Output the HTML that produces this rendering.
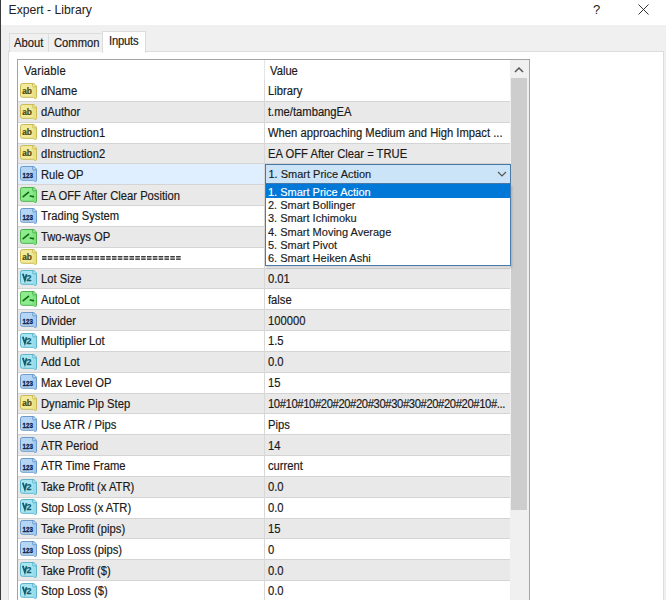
<!DOCTYPE html>
<html><head><meta charset="utf-8"><style>
*{margin:0;padding:0;box-sizing:border-box}
html,body{width:666px;height:600px;overflow:hidden;background:#f0f0f0}
body{position:relative;font-family:"Liberation Sans",sans-serif;color:#000}
.a{position:absolute}
svg text{font-family:"Liberation Sans",sans-serif;font-weight:bold}
.t{position:absolute;white-space:nowrap;font-size:12.0px;line-height:13px;color:#1a1a1a;-webkit-text-stroke-width:0.18px;transform:scaleX(0.935);transform-origin:0 0}
</style></head><body>

<div class="a" style="left:0;top:0;width:666px;height:25px;background:#fff"></div>
<div class="t" style="left:8.5px;top:3.3px;font-size:12.2px;line-height:14px;color:#222;transform:none;-webkit-text-stroke-width:0">Expert - Library</div>
<div class="t" style="left:593px;top:3px;font-size:13px;line-height:14px;color:#222;transform:none;-webkit-text-stroke-width:0">?</div>
<svg class="a" style="left:637px;top:3px" width="13" height="13" viewBox="0 0 13 13"><path d="M1.5 1.5 L11.5 11.5 M11.5 1.5 L1.5 11.5" stroke="#333" stroke-width="1"/></svg>
<div class="a" style="left:0;top:0;width:1px;height:600px;background:#3a3a3a"></div>
<div class="a" style="left:8px;top:51px;width:656px;height:560px;background:#fff;border:1px solid #dcdcdc"></div>
<div class="a" style="left:9px;top:33px;width:40px;height:19px;background:#f0f0f0;border:1px solid #dcdcdc;border-bottom:none"></div>
<div class="t" style="left:14px;top:36.5px">About</div>
<div class="a" style="left:48px;top:33px;width:55px;height:19px;background:#f0f0f0;border:1px solid #dcdcdc;border-bottom:none"></div>
<div class="t" style="left:54px;top:36.5px">Common</div>
<div class="a" style="left:102px;top:31px;width:44px;height:22px;background:#fff;border:1px solid #dcdcdc;border-bottom:none"></div>
<div class="t" style="left:109px;top:34.8px;letter-spacing:-0.2px">Inputs</div>
<div class="a" style="left:17px;top:59px;width:513px;height:560px;background:#fff;border:1px solid #a3a3a8"></div>
<div class="a" style="left:264px;top:60px;width:1px;height:20px;background:#e5e5e5"></div>
<div class="t" style="left:24px;top:64.5px;letter-spacing:0.2px">Variable</div>
<div class="t" style="left:269.5px;top:64.5px">Value</div>
<div class="a" style="left:18px;top:80px;width:492px;height:21px;background:#fff;"></div>
<div class="a" style="left:264px;top:80px;width:1px;height:21px;background:#d8d8d8"></div>
<div class="a" style="left:20px;top:82.7px;height:16px"><svg width="17" height="16" viewBox="0 0 17 16"><path d="M2.5 0.5 H13 Q14 0.5 15 1.5 L15.8 2.3 Q16.5 3 16.5 4 V14.2 Q16.5 15.6 15.2 15.4 Q14 15.2 13.2 14.3 H2.5 Q0.5 14.3 0.5 12.3 V2.5 Q0.5 0.5 2.5 0.5 Z" fill="#f2ea9a" stroke="#c9bb58" stroke-width="1"/><path d="M12.6 3.5 V14.2 Q13.8 15.3 15.2 15.3 Q16 15.3 16 14.2 V4 Z" fill="#e6da70" opacity="0.6"/><path d="M12.6 0.8 V3.2 Q12.6 3.8 13.2 3.8 H16.2" fill="none" stroke="#c9bb58" stroke-width="0.9"/><text x="2.2" y="11" font-size="9.3" fill="#514608" stroke="#514608" stroke-width="0.2" textLength="9.8" lengthAdjust="spacingAndGlyphs">ab</text></svg></div>
<div class="t" style="left:41.2px;top:85.4px;">dName</div>
<div class="t" style="left:267.5px;top:85.4px;">Library</div>
<div class="a" style="left:18px;top:101px;width:492px;height:21px;background:#e9e9e9;border-top:1px solid #d4d4d4;"></div>
<div class="a" style="left:264px;top:101px;width:1px;height:21px;background:#d8d8d8"></div>
<div class="a" style="left:20px;top:103.5px;height:16px"><svg width="17" height="16" viewBox="0 0 17 16"><path d="M2.5 0.5 H13 Q14 0.5 15 1.5 L15.8 2.3 Q16.5 3 16.5 4 V14.2 Q16.5 15.6 15.2 15.4 Q14 15.2 13.2 14.3 H2.5 Q0.5 14.3 0.5 12.3 V2.5 Q0.5 0.5 2.5 0.5 Z" fill="#f2ea9a" stroke="#c9bb58" stroke-width="1"/><path d="M12.6 3.5 V14.2 Q13.8 15.3 15.2 15.3 Q16 15.3 16 14.2 V4 Z" fill="#e6da70" opacity="0.6"/><path d="M12.6 0.8 V3.2 Q12.6 3.8 13.2 3.8 H16.2" fill="none" stroke="#c9bb58" stroke-width="0.9"/><text x="2.2" y="11" font-size="9.3" fill="#514608" stroke="#514608" stroke-width="0.2" textLength="9.8" lengthAdjust="spacingAndGlyphs">ab</text></svg></div>
<div class="t" style="left:41.2px;top:106.2px;">dAuthor</div>
<div class="t" style="left:267.5px;top:106.2px;">t.me/tambangEA</div>
<div class="a" style="left:18px;top:122px;width:492px;height:21px;background:#fff;border-top:1px solid #d4d4d4;"></div>
<div class="a" style="left:264px;top:122px;width:1px;height:21px;background:#d8d8d8"></div>
<div class="a" style="left:20px;top:124.4px;height:16px"><svg width="17" height="16" viewBox="0 0 17 16"><path d="M2.5 0.5 H13 Q14 0.5 15 1.5 L15.8 2.3 Q16.5 3 16.5 4 V14.2 Q16.5 15.6 15.2 15.4 Q14 15.2 13.2 14.3 H2.5 Q0.5 14.3 0.5 12.3 V2.5 Q0.5 0.5 2.5 0.5 Z" fill="#f2ea9a" stroke="#c9bb58" stroke-width="1"/><path d="M12.6 3.5 V14.2 Q13.8 15.3 15.2 15.3 Q16 15.3 16 14.2 V4 Z" fill="#e6da70" opacity="0.6"/><path d="M12.6 0.8 V3.2 Q12.6 3.8 13.2 3.8 H16.2" fill="none" stroke="#c9bb58" stroke-width="0.9"/><text x="2.2" y="11" font-size="9.3" fill="#514608" stroke="#514608" stroke-width="0.2" textLength="9.8" lengthAdjust="spacingAndGlyphs">ab</text></svg></div>
<div class="t" style="left:41.2px;top:127.1px;">dInstruction1</div>
<div class="t" style="left:267.5px;top:127.1px;letter-spacing:0px;">When approaching Medium and High Impact ...</div>
<div class="a" style="left:18px;top:143px;width:492px;height:20px;background:#e9e9e9;border-top:1px solid #d4d4d4;"></div>
<div class="a" style="left:264px;top:143px;width:1px;height:20px;background:#d8d8d8"></div>
<div class="a" style="left:20px;top:145.2px;height:16px"><svg width="17" height="16" viewBox="0 0 17 16"><path d="M2.5 0.5 H13 Q14 0.5 15 1.5 L15.8 2.3 Q16.5 3 16.5 4 V14.2 Q16.5 15.6 15.2 15.4 Q14 15.2 13.2 14.3 H2.5 Q0.5 14.3 0.5 12.3 V2.5 Q0.5 0.5 2.5 0.5 Z" fill="#f2ea9a" stroke="#c9bb58" stroke-width="1"/><path d="M12.6 3.5 V14.2 Q13.8 15.3 15.2 15.3 Q16 15.3 16 14.2 V4 Z" fill="#e6da70" opacity="0.6"/><path d="M12.6 0.8 V3.2 Q12.6 3.8 13.2 3.8 H16.2" fill="none" stroke="#c9bb58" stroke-width="0.9"/><text x="2.2" y="11" font-size="9.3" fill="#514608" stroke="#514608" stroke-width="0.2" textLength="9.8" lengthAdjust="spacingAndGlyphs">ab</text></svg></div>
<div class="t" style="left:41.2px;top:147.9px;">dInstruction2</div>
<div class="t" style="left:267.5px;top:147.9px;">EA OFF After Clear = TRUE</div>
<div class="a" style="left:18px;top:163px;width:492px;height:21px;background:#dfefff;border-top:1px solid #d4d4d4;"></div>
<div class="a" style="left:264px;top:163px;width:1px;height:21px;background:#d8d8d8"></div>
<div class="a" style="left:20px;top:166.0px;height:16px"><svg width="17" height="16" viewBox="0 0 17 16"><path d="M2.5 0.5 H13 Q14 0.5 15 1.5 L15.8 2.3 Q16.5 3 16.5 4 V14.2 Q16.5 15.6 15.2 15.4 Q14 15.2 13.2 14.3 H2.5 Q0.5 14.3 0.5 12.3 V2.5 Q0.5 0.5 2.5 0.5 Z" fill="#b4d5f3" stroke="#6b9acb" stroke-width="1"/><path d="M12.6 3.5 V14.2 Q13.8 15.3 15.2 15.3 Q16 15.3 16 14.2 V4 Z" fill="#9ac2ea" opacity="0.6"/><path d="M12.6 0.8 V3.2 Q12.6 3.8 13.2 3.8 H16.2" fill="none" stroke="#6b9acb" stroke-width="0.9"/><text x="2.5" y="12.0" font-size="7.9" fill="#0a2350" stroke="#0a2350" stroke-width="0.35" textLength="10.4" lengthAdjust="spacingAndGlyphs">123</text></svg></div>
<div class="t" style="left:41.2px;top:168.7px;">Rule OP</div>
<div class="a" style="left:18px;top:184px;width:492px;height:21px;background:#e9e9e9;border-top:1px solid #d4d4d4;"></div>
<div class="a" style="left:264px;top:184px;width:1px;height:21px;background:#d8d8d8"></div>
<div class="a" style="left:20px;top:186.9px;height:16px"><svg width="17" height="16" viewBox="0 0 17 16"><path d="M2.5 0.5 H13 Q14 0.5 15 1.5 L15.8 2.3 Q16.5 3 16.5 4 V14.2 Q16.5 15.6 15.2 15.4 Q14 15.2 13.2 14.3 H2.5 Q0.5 14.3 0.5 12.3 V2.5 Q0.5 0.5 2.5 0.5 Z" fill="#8eea8e" stroke="#4cb24c" stroke-width="1"/><path d="M12.6 3.5 V14.2 Q13.8 15.3 15.2 15.3 Q16 15.3 16 14.2 V4 Z" fill="#74dc74" opacity="0.6"/><path d="M12.6 0.8 V3.2 Q12.6 3.8 13.2 3.8 H16.2" fill="none" stroke="#4cb24c" stroke-width="0.9"/><path d="M3.2 9.7 L8.5 5.3 M10.3 9.0 L13.3 9.7" stroke="#0a6e0a" stroke-width="1.7" stroke-linecap="round" fill="none"/></svg></div>
<div class="t" style="left:41.2px;top:189.6px;">EA OFF After Clear Position</div>
<div class="a" style="left:18px;top:205px;width:492px;height:21px;background:#fff;border-top:1px solid #d4d4d4;"></div>
<div class="a" style="left:264px;top:205px;width:1px;height:21px;background:#d8d8d8"></div>
<div class="a" style="left:20px;top:207.7px;height:16px"><svg width="17" height="16" viewBox="0 0 17 16"><path d="M2.5 0.5 H13 Q14 0.5 15 1.5 L15.8 2.3 Q16.5 3 16.5 4 V14.2 Q16.5 15.6 15.2 15.4 Q14 15.2 13.2 14.3 H2.5 Q0.5 14.3 0.5 12.3 V2.5 Q0.5 0.5 2.5 0.5 Z" fill="#b4d5f3" stroke="#6b9acb" stroke-width="1"/><path d="M12.6 3.5 V14.2 Q13.8 15.3 15.2 15.3 Q16 15.3 16 14.2 V4 Z" fill="#9ac2ea" opacity="0.6"/><path d="M12.6 0.8 V3.2 Q12.6 3.8 13.2 3.8 H16.2" fill="none" stroke="#6b9acb" stroke-width="0.9"/><text x="2.5" y="12.0" font-size="7.9" fill="#0a2350" stroke="#0a2350" stroke-width="0.35" textLength="10.4" lengthAdjust="spacingAndGlyphs">123</text></svg></div>
<div class="t" style="left:41.2px;top:210.4px;">Trading System</div>
<div class="a" style="left:18px;top:226px;width:492px;height:21px;background:#e9e9e9;border-top:1px solid #d4d4d4;"></div>
<div class="a" style="left:264px;top:226px;width:1px;height:21px;background:#d8d8d8"></div>
<div class="a" style="left:20px;top:228.5px;height:16px"><svg width="17" height="16" viewBox="0 0 17 16"><path d="M2.5 0.5 H13 Q14 0.5 15 1.5 L15.8 2.3 Q16.5 3 16.5 4 V14.2 Q16.5 15.6 15.2 15.4 Q14 15.2 13.2 14.3 H2.5 Q0.5 14.3 0.5 12.3 V2.5 Q0.5 0.5 2.5 0.5 Z" fill="#8eea8e" stroke="#4cb24c" stroke-width="1"/><path d="M12.6 3.5 V14.2 Q13.8 15.3 15.2 15.3 Q16 15.3 16 14.2 V4 Z" fill="#74dc74" opacity="0.6"/><path d="M12.6 0.8 V3.2 Q12.6 3.8 13.2 3.8 H16.2" fill="none" stroke="#4cb24c" stroke-width="0.9"/><path d="M3.2 9.7 L8.5 5.3 M10.3 9.0 L13.3 9.7" stroke="#0a6e0a" stroke-width="1.7" stroke-linecap="round" fill="none"/></svg></div>
<div class="t" style="left:41.2px;top:231.2px;">Two-ways OP</div>
<div class="a" style="left:18px;top:247px;width:492px;height:21px;background:#fff;border-top:1px solid #d4d4d4;"></div>
<div class="a" style="left:264px;top:247px;width:1px;height:21px;background:#d8d8d8"></div>
<div class="a" style="left:20px;top:249.4px;height:16px"><svg width="17" height="16" viewBox="0 0 17 16"><path d="M2.5 0.5 H13 Q14 0.5 15 1.5 L15.8 2.3 Q16.5 3 16.5 4 V14.2 Q16.5 15.6 15.2 15.4 Q14 15.2 13.2 14.3 H2.5 Q0.5 14.3 0.5 12.3 V2.5 Q0.5 0.5 2.5 0.5 Z" fill="#f2ea9a" stroke="#c9bb58" stroke-width="1"/><path d="M12.6 3.5 V14.2 Q13.8 15.3 15.2 15.3 Q16 15.3 16 14.2 V4 Z" fill="#e6da70" opacity="0.6"/><path d="M12.6 0.8 V3.2 Q12.6 3.8 13.2 3.8 H16.2" fill="none" stroke="#c9bb58" stroke-width="0.9"/><text x="2.2" y="11" font-size="9.3" fill="#514608" stroke="#514608" stroke-width="0.2" textLength="9.8" lengthAdjust="spacingAndGlyphs">ab</text></svg></div>
<svg class="a" style="left:42.2px;top:256.0px" width="140" height="4" fill="#3a3a3a"><rect x="0.00" y="0" width="4.6" height="1.5"/><rect x="0.00" y="2.4" width="4.6" height="1.5"/><rect x="5.83" y="0" width="4.6" height="1.5"/><rect x="5.83" y="2.4" width="4.6" height="1.5"/><rect x="11.66" y="0" width="4.6" height="1.5"/><rect x="11.66" y="2.4" width="4.6" height="1.5"/><rect x="17.49" y="0" width="4.6" height="1.5"/><rect x="17.49" y="2.4" width="4.6" height="1.5"/><rect x="23.32" y="0" width="4.6" height="1.5"/><rect x="23.32" y="2.4" width="4.6" height="1.5"/><rect x="29.15" y="0" width="4.6" height="1.5"/><rect x="29.15" y="2.4" width="4.6" height="1.5"/><rect x="34.98" y="0" width="4.6" height="1.5"/><rect x="34.98" y="2.4" width="4.6" height="1.5"/><rect x="40.81" y="0" width="4.6" height="1.5"/><rect x="40.81" y="2.4" width="4.6" height="1.5"/><rect x="46.64" y="0" width="4.6" height="1.5"/><rect x="46.64" y="2.4" width="4.6" height="1.5"/><rect x="52.47" y="0" width="4.6" height="1.5"/><rect x="52.47" y="2.4" width="4.6" height="1.5"/><rect x="58.30" y="0" width="4.6" height="1.5"/><rect x="58.30" y="2.4" width="4.6" height="1.5"/><rect x="64.13" y="0" width="4.6" height="1.5"/><rect x="64.13" y="2.4" width="4.6" height="1.5"/><rect x="69.96" y="0" width="4.6" height="1.5"/><rect x="69.96" y="2.4" width="4.6" height="1.5"/><rect x="75.79" y="0" width="4.6" height="1.5"/><rect x="75.79" y="2.4" width="4.6" height="1.5"/><rect x="81.62" y="0" width="4.6" height="1.5"/><rect x="81.62" y="2.4" width="4.6" height="1.5"/><rect x="87.45" y="0" width="4.6" height="1.5"/><rect x="87.45" y="2.4" width="4.6" height="1.5"/><rect x="93.28" y="0" width="4.6" height="1.5"/><rect x="93.28" y="2.4" width="4.6" height="1.5"/><rect x="99.11" y="0" width="4.6" height="1.5"/><rect x="99.11" y="2.4" width="4.6" height="1.5"/><rect x="104.94" y="0" width="4.6" height="1.5"/><rect x="104.94" y="2.4" width="4.6" height="1.5"/><rect x="110.77" y="0" width="4.6" height="1.5"/><rect x="110.77" y="2.4" width="4.6" height="1.5"/><rect x="116.60" y="0" width="4.6" height="1.5"/><rect x="116.60" y="2.4" width="4.6" height="1.5"/><rect x="122.43" y="0" width="4.6" height="1.5"/><rect x="122.43" y="2.4" width="4.6" height="1.5"/><rect x="128.26" y="0" width="4.6" height="1.5"/><rect x="128.26" y="2.4" width="4.6" height="1.5"/><rect x="134.09" y="0" width="4.6" height="1.5"/><rect x="134.09" y="2.4" width="4.6" height="1.5"/></svg>
<div class="a" style="left:18px;top:268px;width:492px;height:20px;background:#e9e9e9;border-top:1px solid #d4d4d4;"></div>
<div class="a" style="left:264px;top:268px;width:1px;height:20px;background:#d8d8d8"></div>
<div class="a" style="left:20px;top:270.2px;height:16px"><svg width="17" height="16" viewBox="0 0 17 16"><path d="M2.5 0.5 H13 Q14 0.5 15 1.5 L15.8 2.3 Q16.5 3 16.5 4 V14.2 Q16.5 15.6 15.2 15.4 Q14 15.2 13.2 14.3 H2.5 Q0.5 14.3 0.5 12.3 V2.5 Q0.5 0.5 2.5 0.5 Z" fill="#a8e5f2" stroke="#5db4cb" stroke-width="1"/><path d="M12.6 3.5 V14.2 Q13.8 15.3 15.2 15.3 Q16 15.3 16 14.2 V4 Z" fill="#88d6e9" opacity="0.6"/><path d="M12.6 0.8 V3.2 Q12.6 3.8 13.2 3.8 H16.2" fill="none" stroke="#5db4cb" stroke-width="0.9"/><path d="M2.8 3.8 L4.9 10.2 L6.6 4.2" stroke="#135c6c" stroke-width="1.8" fill="none"/><text x="6.5" y="10.7" font-size="9.6" fill="#135c6c" stroke="#135c6c" stroke-width="0.25" textLength="5.0" lengthAdjust="spacingAndGlyphs">2</text></svg></div>
<div class="t" style="left:41.2px;top:272.9px;">Lot Size</div>
<div class="t" style="left:267.5px;top:272.9px;">0.01</div>
<div class="a" style="left:18px;top:288px;width:492px;height:21px;background:#fff;border-top:1px solid #d4d4d4;"></div>
<div class="a" style="left:264px;top:288px;width:1px;height:21px;background:#d8d8d8"></div>
<div class="a" style="left:20px;top:291.0px;height:16px"><svg width="17" height="16" viewBox="0 0 17 16"><path d="M2.5 0.5 H13 Q14 0.5 15 1.5 L15.8 2.3 Q16.5 3 16.5 4 V14.2 Q16.5 15.6 15.2 15.4 Q14 15.2 13.2 14.3 H2.5 Q0.5 14.3 0.5 12.3 V2.5 Q0.5 0.5 2.5 0.5 Z" fill="#8eea8e" stroke="#4cb24c" stroke-width="1"/><path d="M12.6 3.5 V14.2 Q13.8 15.3 15.2 15.3 Q16 15.3 16 14.2 V4 Z" fill="#74dc74" opacity="0.6"/><path d="M12.6 0.8 V3.2 Q12.6 3.8 13.2 3.8 H16.2" fill="none" stroke="#4cb24c" stroke-width="0.9"/><path d="M3.2 9.7 L8.5 5.3 M10.3 9.0 L13.3 9.7" stroke="#0a6e0a" stroke-width="1.7" stroke-linecap="round" fill="none"/></svg></div>
<div class="t" style="left:41.2px;top:293.7px;">AutoLot</div>
<div class="t" style="left:267.5px;top:293.7px;">false</div>
<div class="a" style="left:18px;top:309px;width:492px;height:21px;background:#e9e9e9;border-top:1px solid #d4d4d4;"></div>
<div class="a" style="left:264px;top:309px;width:1px;height:21px;background:#d8d8d8"></div>
<div class="a" style="left:20px;top:311.9px;height:16px"><svg width="17" height="16" viewBox="0 0 17 16"><path d="M2.5 0.5 H13 Q14 0.5 15 1.5 L15.8 2.3 Q16.5 3 16.5 4 V14.2 Q16.5 15.6 15.2 15.4 Q14 15.2 13.2 14.3 H2.5 Q0.5 14.3 0.5 12.3 V2.5 Q0.5 0.5 2.5 0.5 Z" fill="#b4d5f3" stroke="#6b9acb" stroke-width="1"/><path d="M12.6 3.5 V14.2 Q13.8 15.3 15.2 15.3 Q16 15.3 16 14.2 V4 Z" fill="#9ac2ea" opacity="0.6"/><path d="M12.6 0.8 V3.2 Q12.6 3.8 13.2 3.8 H16.2" fill="none" stroke="#6b9acb" stroke-width="0.9"/><text x="2.5" y="12.0" font-size="7.9" fill="#0a2350" stroke="#0a2350" stroke-width="0.35" textLength="10.4" lengthAdjust="spacingAndGlyphs">123</text></svg></div>
<div class="t" style="left:41.2px;top:314.6px;">Divider</div>
<div class="t" style="left:267.5px;top:314.6px;">100000</div>
<div class="a" style="left:18px;top:330px;width:492px;height:21px;background:#fff;border-top:1px solid #d4d4d4;"></div>
<div class="a" style="left:264px;top:330px;width:1px;height:21px;background:#d8d8d8"></div>
<div class="a" style="left:20px;top:332.7px;height:16px"><svg width="17" height="16" viewBox="0 0 17 16"><path d="M2.5 0.5 H13 Q14 0.5 15 1.5 L15.8 2.3 Q16.5 3 16.5 4 V14.2 Q16.5 15.6 15.2 15.4 Q14 15.2 13.2 14.3 H2.5 Q0.5 14.3 0.5 12.3 V2.5 Q0.5 0.5 2.5 0.5 Z" fill="#a8e5f2" stroke="#5db4cb" stroke-width="1"/><path d="M12.6 3.5 V14.2 Q13.8 15.3 15.2 15.3 Q16 15.3 16 14.2 V4 Z" fill="#88d6e9" opacity="0.6"/><path d="M12.6 0.8 V3.2 Q12.6 3.8 13.2 3.8 H16.2" fill="none" stroke="#5db4cb" stroke-width="0.9"/><path d="M2.8 3.8 L4.9 10.2 L6.6 4.2" stroke="#135c6c" stroke-width="1.8" fill="none"/><text x="6.5" y="10.7" font-size="9.6" fill="#135c6c" stroke="#135c6c" stroke-width="0.25" textLength="5.0" lengthAdjust="spacingAndGlyphs">2</text></svg></div>
<div class="t" style="left:41.2px;top:335.4px;">Multiplier Lot</div>
<div class="t" style="left:267.5px;top:335.4px;">1.5</div>
<div class="a" style="left:18px;top:351px;width:492px;height:21px;background:#e9e9e9;border-top:1px solid #d4d4d4;"></div>
<div class="a" style="left:264px;top:351px;width:1px;height:21px;background:#d8d8d8"></div>
<div class="a" style="left:20px;top:353.5px;height:16px"><svg width="17" height="16" viewBox="0 0 17 16"><path d="M2.5 0.5 H13 Q14 0.5 15 1.5 L15.8 2.3 Q16.5 3 16.5 4 V14.2 Q16.5 15.6 15.2 15.4 Q14 15.2 13.2 14.3 H2.5 Q0.5 14.3 0.5 12.3 V2.5 Q0.5 0.5 2.5 0.5 Z" fill="#a8e5f2" stroke="#5db4cb" stroke-width="1"/><path d="M12.6 3.5 V14.2 Q13.8 15.3 15.2 15.3 Q16 15.3 16 14.2 V4 Z" fill="#88d6e9" opacity="0.6"/><path d="M12.6 0.8 V3.2 Q12.6 3.8 13.2 3.8 H16.2" fill="none" stroke="#5db4cb" stroke-width="0.9"/><path d="M2.8 3.8 L4.9 10.2 L6.6 4.2" stroke="#135c6c" stroke-width="1.8" fill="none"/><text x="6.5" y="10.7" font-size="9.6" fill="#135c6c" stroke="#135c6c" stroke-width="0.25" textLength="5.0" lengthAdjust="spacingAndGlyphs">2</text></svg></div>
<div class="t" style="left:41.2px;top:356.2px;">Add Lot</div>
<div class="t" style="left:267.5px;top:356.2px;">0.0</div>
<div class="a" style="left:18px;top:372px;width:492px;height:21px;background:#fff;border-top:1px solid #d4d4d4;"></div>
<div class="a" style="left:264px;top:372px;width:1px;height:21px;background:#d8d8d8"></div>
<div class="a" style="left:20px;top:374.4px;height:16px"><svg width="17" height="16" viewBox="0 0 17 16"><path d="M2.5 0.5 H13 Q14 0.5 15 1.5 L15.8 2.3 Q16.5 3 16.5 4 V14.2 Q16.5 15.6 15.2 15.4 Q14 15.2 13.2 14.3 H2.5 Q0.5 14.3 0.5 12.3 V2.5 Q0.5 0.5 2.5 0.5 Z" fill="#b4d5f3" stroke="#6b9acb" stroke-width="1"/><path d="M12.6 3.5 V14.2 Q13.8 15.3 15.2 15.3 Q16 15.3 16 14.2 V4 Z" fill="#9ac2ea" opacity="0.6"/><path d="M12.6 0.8 V3.2 Q12.6 3.8 13.2 3.8 H16.2" fill="none" stroke="#6b9acb" stroke-width="0.9"/><text x="2.5" y="12.0" font-size="7.9" fill="#0a2350" stroke="#0a2350" stroke-width="0.35" textLength="10.4" lengthAdjust="spacingAndGlyphs">123</text></svg></div>
<div class="t" style="left:41.2px;top:377.1px;">Max Level OP</div>
<div class="t" style="left:267.5px;top:377.1px;">15</div>
<div class="a" style="left:18px;top:393px;width:492px;height:20px;background:#e9e9e9;border-top:1px solid #d4d4d4;"></div>
<div class="a" style="left:264px;top:393px;width:1px;height:20px;background:#d8d8d8"></div>
<div class="a" style="left:20px;top:395.2px;height:16px"><svg width="17" height="16" viewBox="0 0 17 16"><path d="M2.5 0.5 H13 Q14 0.5 15 1.5 L15.8 2.3 Q16.5 3 16.5 4 V14.2 Q16.5 15.6 15.2 15.4 Q14 15.2 13.2 14.3 H2.5 Q0.5 14.3 0.5 12.3 V2.5 Q0.5 0.5 2.5 0.5 Z" fill="#f2ea9a" stroke="#c9bb58" stroke-width="1"/><path d="M12.6 3.5 V14.2 Q13.8 15.3 15.2 15.3 Q16 15.3 16 14.2 V4 Z" fill="#e6da70" opacity="0.6"/><path d="M12.6 0.8 V3.2 Q12.6 3.8 13.2 3.8 H16.2" fill="none" stroke="#c9bb58" stroke-width="0.9"/><text x="2.2" y="11" font-size="9.3" fill="#514608" stroke="#514608" stroke-width="0.2" textLength="9.8" lengthAdjust="spacingAndGlyphs">ab</text></svg></div>
<div class="t" style="left:41.2px;top:397.9px;">Dynamic Pip Step</div>
<div class="t" style="left:267.5px;top:397.9px;letter-spacing:-0.4px;">10#10#10#20#20#20#30#30#30#20#20#20#10#...</div>
<div class="a" style="left:18px;top:413px;width:492px;height:21px;background:#fff;border-top:1px solid #d4d4d4;"></div>
<div class="a" style="left:264px;top:413px;width:1px;height:21px;background:#d8d8d8"></div>
<div class="a" style="left:20px;top:416.0px;height:16px"><svg width="17" height="16" viewBox="0 0 17 16"><path d="M2.5 0.5 H13 Q14 0.5 15 1.5 L15.8 2.3 Q16.5 3 16.5 4 V14.2 Q16.5 15.6 15.2 15.4 Q14 15.2 13.2 14.3 H2.5 Q0.5 14.3 0.5 12.3 V2.5 Q0.5 0.5 2.5 0.5 Z" fill="#b4d5f3" stroke="#6b9acb" stroke-width="1"/><path d="M12.6 3.5 V14.2 Q13.8 15.3 15.2 15.3 Q16 15.3 16 14.2 V4 Z" fill="#9ac2ea" opacity="0.6"/><path d="M12.6 0.8 V3.2 Q12.6 3.8 13.2 3.8 H16.2" fill="none" stroke="#6b9acb" stroke-width="0.9"/><text x="2.5" y="12.0" font-size="7.9" fill="#0a2350" stroke="#0a2350" stroke-width="0.35" textLength="10.4" lengthAdjust="spacingAndGlyphs">123</text></svg></div>
<div class="t" style="left:41.2px;top:418.7px;">Use ATR / Pips</div>
<div class="t" style="left:267.5px;top:418.7px;">Pips</div>
<div class="a" style="left:18px;top:434px;width:492px;height:21px;background:#e9e9e9;border-top:1px solid #d4d4d4;"></div>
<div class="a" style="left:264px;top:434px;width:1px;height:21px;background:#d8d8d8"></div>
<div class="a" style="left:20px;top:436.9px;height:16px"><svg width="17" height="16" viewBox="0 0 17 16"><path d="M2.5 0.5 H13 Q14 0.5 15 1.5 L15.8 2.3 Q16.5 3 16.5 4 V14.2 Q16.5 15.6 15.2 15.4 Q14 15.2 13.2 14.3 H2.5 Q0.5 14.3 0.5 12.3 V2.5 Q0.5 0.5 2.5 0.5 Z" fill="#b4d5f3" stroke="#6b9acb" stroke-width="1"/><path d="M12.6 3.5 V14.2 Q13.8 15.3 15.2 15.3 Q16 15.3 16 14.2 V4 Z" fill="#9ac2ea" opacity="0.6"/><path d="M12.6 0.8 V3.2 Q12.6 3.8 13.2 3.8 H16.2" fill="none" stroke="#6b9acb" stroke-width="0.9"/><text x="2.5" y="12.0" font-size="7.9" fill="#0a2350" stroke="#0a2350" stroke-width="0.35" textLength="10.4" lengthAdjust="spacingAndGlyphs">123</text></svg></div>
<div class="t" style="left:41.2px;top:439.6px;">ATR Period</div>
<div class="t" style="left:267.5px;top:439.6px;">14</div>
<div class="a" style="left:18px;top:455px;width:492px;height:21px;background:#fff;border-top:1px solid #d4d4d4;"></div>
<div class="a" style="left:264px;top:455px;width:1px;height:21px;background:#d8d8d8"></div>
<div class="a" style="left:20px;top:457.7px;height:16px"><svg width="17" height="16" viewBox="0 0 17 16"><path d="M2.5 0.5 H13 Q14 0.5 15 1.5 L15.8 2.3 Q16.5 3 16.5 4 V14.2 Q16.5 15.6 15.2 15.4 Q14 15.2 13.2 14.3 H2.5 Q0.5 14.3 0.5 12.3 V2.5 Q0.5 0.5 2.5 0.5 Z" fill="#b4d5f3" stroke="#6b9acb" stroke-width="1"/><path d="M12.6 3.5 V14.2 Q13.8 15.3 15.2 15.3 Q16 15.3 16 14.2 V4 Z" fill="#9ac2ea" opacity="0.6"/><path d="M12.6 0.8 V3.2 Q12.6 3.8 13.2 3.8 H16.2" fill="none" stroke="#6b9acb" stroke-width="0.9"/><text x="2.5" y="12.0" font-size="7.9" fill="#0a2350" stroke="#0a2350" stroke-width="0.35" textLength="10.4" lengthAdjust="spacingAndGlyphs">123</text></svg></div>
<div class="t" style="left:41.2px;top:460.4px;">ATR Time Frame</div>
<div class="t" style="left:267.5px;top:460.4px;">current</div>
<div class="a" style="left:18px;top:476px;width:492px;height:21px;background:#e9e9e9;border-top:1px solid #d4d4d4;"></div>
<div class="a" style="left:264px;top:476px;width:1px;height:21px;background:#d8d8d8"></div>
<div class="a" style="left:20px;top:478.5px;height:16px"><svg width="17" height="16" viewBox="0 0 17 16"><path d="M2.5 0.5 H13 Q14 0.5 15 1.5 L15.8 2.3 Q16.5 3 16.5 4 V14.2 Q16.5 15.6 15.2 15.4 Q14 15.2 13.2 14.3 H2.5 Q0.5 14.3 0.5 12.3 V2.5 Q0.5 0.5 2.5 0.5 Z" fill="#a8e5f2" stroke="#5db4cb" stroke-width="1"/><path d="M12.6 3.5 V14.2 Q13.8 15.3 15.2 15.3 Q16 15.3 16 14.2 V4 Z" fill="#88d6e9" opacity="0.6"/><path d="M12.6 0.8 V3.2 Q12.6 3.8 13.2 3.8 H16.2" fill="none" stroke="#5db4cb" stroke-width="0.9"/><path d="M2.8 3.8 L4.9 10.2 L6.6 4.2" stroke="#135c6c" stroke-width="1.8" fill="none"/><text x="6.5" y="10.7" font-size="9.6" fill="#135c6c" stroke="#135c6c" stroke-width="0.25" textLength="5.0" lengthAdjust="spacingAndGlyphs">2</text></svg></div>
<div class="t" style="left:41.2px;top:481.2px;">Take Profit (x ATR)</div>
<div class="t" style="left:267.5px;top:481.2px;">0.0</div>
<div class="a" style="left:18px;top:497px;width:492px;height:21px;background:#fff;border-top:1px solid #d4d4d4;"></div>
<div class="a" style="left:264px;top:497px;width:1px;height:21px;background:#d8d8d8"></div>
<div class="a" style="left:20px;top:499.4px;height:16px"><svg width="17" height="16" viewBox="0 0 17 16"><path d="M2.5 0.5 H13 Q14 0.5 15 1.5 L15.8 2.3 Q16.5 3 16.5 4 V14.2 Q16.5 15.6 15.2 15.4 Q14 15.2 13.2 14.3 H2.5 Q0.5 14.3 0.5 12.3 V2.5 Q0.5 0.5 2.5 0.5 Z" fill="#a8e5f2" stroke="#5db4cb" stroke-width="1"/><path d="M12.6 3.5 V14.2 Q13.8 15.3 15.2 15.3 Q16 15.3 16 14.2 V4 Z" fill="#88d6e9" opacity="0.6"/><path d="M12.6 0.8 V3.2 Q12.6 3.8 13.2 3.8 H16.2" fill="none" stroke="#5db4cb" stroke-width="0.9"/><path d="M2.8 3.8 L4.9 10.2 L6.6 4.2" stroke="#135c6c" stroke-width="1.8" fill="none"/><text x="6.5" y="10.7" font-size="9.6" fill="#135c6c" stroke="#135c6c" stroke-width="0.25" textLength="5.0" lengthAdjust="spacingAndGlyphs">2</text></svg></div>
<div class="t" style="left:41.2px;top:502.1px;">Stop Loss (x ATR)</div>
<div class="t" style="left:267.5px;top:502.1px;">0.0</div>
<div class="a" style="left:18px;top:518px;width:492px;height:20px;background:#e9e9e9;border-top:1px solid #d4d4d4;"></div>
<div class="a" style="left:264px;top:518px;width:1px;height:20px;background:#d8d8d8"></div>
<div class="a" style="left:20px;top:520.2px;height:16px"><svg width="17" height="16" viewBox="0 0 17 16"><path d="M2.5 0.5 H13 Q14 0.5 15 1.5 L15.8 2.3 Q16.5 3 16.5 4 V14.2 Q16.5 15.6 15.2 15.4 Q14 15.2 13.2 14.3 H2.5 Q0.5 14.3 0.5 12.3 V2.5 Q0.5 0.5 2.5 0.5 Z" fill="#b4d5f3" stroke="#6b9acb" stroke-width="1"/><path d="M12.6 3.5 V14.2 Q13.8 15.3 15.2 15.3 Q16 15.3 16 14.2 V4 Z" fill="#9ac2ea" opacity="0.6"/><path d="M12.6 0.8 V3.2 Q12.6 3.8 13.2 3.8 H16.2" fill="none" stroke="#6b9acb" stroke-width="0.9"/><text x="2.5" y="12.0" font-size="7.9" fill="#0a2350" stroke="#0a2350" stroke-width="0.35" textLength="10.4" lengthAdjust="spacingAndGlyphs">123</text></svg></div>
<div class="t" style="left:41.2px;top:522.9px;">Take Profit (pips)</div>
<div class="t" style="left:267.5px;top:522.9px;">15</div>
<div class="a" style="left:18px;top:538px;width:492px;height:21px;background:#fff;border-top:1px solid #d4d4d4;"></div>
<div class="a" style="left:264px;top:538px;width:1px;height:21px;background:#d8d8d8"></div>
<div class="a" style="left:20px;top:541.0px;height:16px"><svg width="17" height="16" viewBox="0 0 17 16"><path d="M2.5 0.5 H13 Q14 0.5 15 1.5 L15.8 2.3 Q16.5 3 16.5 4 V14.2 Q16.5 15.6 15.2 15.4 Q14 15.2 13.2 14.3 H2.5 Q0.5 14.3 0.5 12.3 V2.5 Q0.5 0.5 2.5 0.5 Z" fill="#b4d5f3" stroke="#6b9acb" stroke-width="1"/><path d="M12.6 3.5 V14.2 Q13.8 15.3 15.2 15.3 Q16 15.3 16 14.2 V4 Z" fill="#9ac2ea" opacity="0.6"/><path d="M12.6 0.8 V3.2 Q12.6 3.8 13.2 3.8 H16.2" fill="none" stroke="#6b9acb" stroke-width="0.9"/><text x="2.5" y="12.0" font-size="7.9" fill="#0a2350" stroke="#0a2350" stroke-width="0.35" textLength="10.4" lengthAdjust="spacingAndGlyphs">123</text></svg></div>
<div class="t" style="left:41.2px;top:543.7px;">Stop Loss (pips)</div>
<div class="t" style="left:267.5px;top:543.7px;">0</div>
<div class="a" style="left:18px;top:559px;width:492px;height:21px;background:#e9e9e9;border-top:1px solid #d4d4d4;"></div>
<div class="a" style="left:264px;top:559px;width:1px;height:21px;background:#d8d8d8"></div>
<div class="a" style="left:20px;top:561.9px;height:16px"><svg width="17" height="16" viewBox="0 0 17 16"><path d="M2.5 0.5 H13 Q14 0.5 15 1.5 L15.8 2.3 Q16.5 3 16.5 4 V14.2 Q16.5 15.6 15.2 15.4 Q14 15.2 13.2 14.3 H2.5 Q0.5 14.3 0.5 12.3 V2.5 Q0.5 0.5 2.5 0.5 Z" fill="#a8e5f2" stroke="#5db4cb" stroke-width="1"/><path d="M12.6 3.5 V14.2 Q13.8 15.3 15.2 15.3 Q16 15.3 16 14.2 V4 Z" fill="#88d6e9" opacity="0.6"/><path d="M12.6 0.8 V3.2 Q12.6 3.8 13.2 3.8 H16.2" fill="none" stroke="#5db4cb" stroke-width="0.9"/><path d="M2.8 3.8 L4.9 10.2 L6.6 4.2" stroke="#135c6c" stroke-width="1.8" fill="none"/><text x="6.5" y="10.7" font-size="9.6" fill="#135c6c" stroke="#135c6c" stroke-width="0.25" textLength="5.0" lengthAdjust="spacingAndGlyphs">2</text></svg></div>
<div class="t" style="left:41.2px;top:564.6px;">Take Profit ($)</div>
<div class="t" style="left:267.5px;top:564.6px;">0.0</div>
<div class="a" style="left:18px;top:580px;width:492px;height:21px;background:#fff;border-top:1px solid #d4d4d4;"></div>
<div class="a" style="left:264px;top:580px;width:1px;height:21px;background:#d8d8d8"></div>
<div class="a" style="left:20px;top:582.7px;height:16px"><svg width="17" height="16" viewBox="0 0 17 16"><path d="M2.5 0.5 H13 Q14 0.5 15 1.5 L15.8 2.3 Q16.5 3 16.5 4 V14.2 Q16.5 15.6 15.2 15.4 Q14 15.2 13.2 14.3 H2.5 Q0.5 14.3 0.5 12.3 V2.5 Q0.5 0.5 2.5 0.5 Z" fill="#a8e5f2" stroke="#5db4cb" stroke-width="1"/><path d="M12.6 3.5 V14.2 Q13.8 15.3 15.2 15.3 Q16 15.3 16 14.2 V4 Z" fill="#88d6e9" opacity="0.6"/><path d="M12.6 0.8 V3.2 Q12.6 3.8 13.2 3.8 H16.2" fill="none" stroke="#5db4cb" stroke-width="0.9"/><path d="M2.8 3.8 L4.9 10.2 L6.6 4.2" stroke="#135c6c" stroke-width="1.8" fill="none"/><text x="6.5" y="10.7" font-size="9.6" fill="#135c6c" stroke="#135c6c" stroke-width="0.25" textLength="5.0" lengthAdjust="spacingAndGlyphs">2</text></svg></div>
<div class="t" style="left:41.2px;top:585.4px;">Stop Loss ($)</div>
<div class="t" style="left:267.5px;top:585.4px;">0.0</div>
<div class="a" style="left:510px;top:60px;width:19px;height:540px;background:#f0f0f0"></div>
<div class="a" style="left:511px;top:78px;width:16px;height:432px;background:#cdcdcd"></div>
<svg class="a" style="left:514px;top:65.8px" width="10" height="8" viewBox="0 0 10 8"><path d="M1 6 L5 2 L9 6" stroke="#555" stroke-width="1.5" fill="none"/></svg>
<div class="a" style="left:265px;top:164px;width:246px;height:20px;background:#cce4f7;border:1px solid #4a77a3"></div>
<div class="t" style="left:268.5px;top:168.3px;font-size:11px;transform:none;-webkit-text-stroke-width:0.15px">1. Smart Price Action</div>
<svg class="a" style="left:497px;top:170px" width="10" height="8" viewBox="0 0 10 8"><path d="M1 2 L5 6 L9 2" stroke="#555" stroke-width="1.2" fill="none"/></svg>
<div class="a" style="left:265px;top:184px;width:246px;height:82px;background:#fff;border:1px solid #4a7cae;border-top:none;box-shadow:1px 2px 2px rgba(0,0,0,0.18)"></div>
<div class="a" style="left:266px;top:184px;width:244px;height:14px;background:#0078d7"></div>
<div class="t" style="left:268px;top:185.7px;color:#fff;font-size:11px;transform:none;-webkit-text-stroke-width:0.15px">1. Smart Price Action</div>
<div class="t" style="left:268px;top:199.0px;color:#1a1a1a;font-size:11px;transform:none;-webkit-text-stroke-width:0.15px">2. Smart Bollinger</div>
<div class="t" style="left:268px;top:212.3px;color:#1a1a1a;font-size:11px;transform:none;-webkit-text-stroke-width:0.15px">3. Smart Ichimoku</div>
<div class="t" style="left:268px;top:225.6px;color:#1a1a1a;font-size:11px;transform:none;-webkit-text-stroke-width:0.15px">4. Smart Moving Average</div>
<div class="t" style="left:268px;top:238.9px;color:#1a1a1a;font-size:11px;transform:none;-webkit-text-stroke-width:0.15px">5. Smart Pivot</div>
<div class="t" style="left:268px;top:252.2px;color:#1a1a1a;font-size:11px;transform:none;-webkit-text-stroke-width:0.15px">6. Smart Heiken Ashi</div>
</body></html>
